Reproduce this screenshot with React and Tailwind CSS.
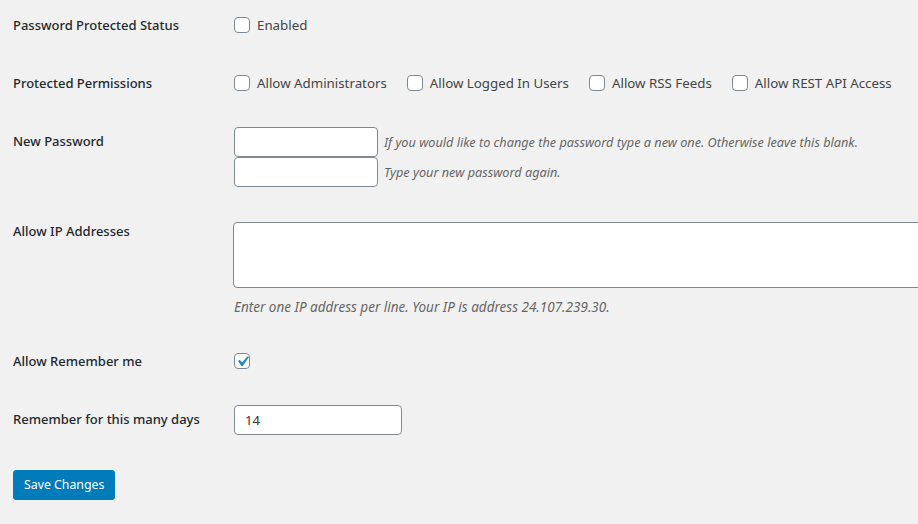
import React from 'react';

function Box({ checked }) {
    return (
        <span className="flex size-4 shrink-0 items-center justify-center rounded-[4px] border border-[#7e8993] bg-white">
            {checked && (
                <svg viewBox="0 0 20 20" className="size-[21px] shrink-0">
                    <path d="M14.83 4.89l1.34.94-5.81 8.38H9.02L5.78 9.67l1.34-1.25 2.57 2.4z" fill="#1e8cbe" />
                </svg>
            )}
        </span>
    );
}

function Check({ label, checked, last }) {
    return (
        <label className={`flex items-center gap-[7px] whitespace-nowrap text-[13.3px] text-[#444] ${last ? '' : 'mr-[20px]'}`}>
            <Box checked={checked} />
            <span>{label}</span>
        </label>
    );
}

function Th({ children, top = 0 }) {
    return (
        <div className="w-[221px] shrink-0 whitespace-nowrap font-medium text-[#23282d]" style={{ paddingTop: top }}>
            {children}
        </div>
    );
}

export default function App() {
    return (
        <div className="min-h-screen overflow-hidden bg-[#f1f1f1] pl-[13px] pt-[16px] text-[13px] leading-[18px] text-[#444]" style={{ fontFamily: '"Noto Sans", "Open Sans", sans-serif' }}>
            <div className="flex">
                <Th>Password Protected Status</Th>
                <Check label="Enabled" last />
            </div>

            <div className="mt-[40px] flex">
                <Th>Protected Permissions</Th>
                <div className="flex">
                    <Check label="Allow Administrators" />
                    <Check label="Allow Logged In Users" />
                    <Check label="Allow RSS Feeds" />
                    <Check label="Allow REST API Access" last />
                </div>
            </div>

            <div className="mt-[35px] flex">
                <Th top={5}>New Password</Th>
                <div className="flex flex-col">
                    <div className="flex items-center gap-[6px]">
                        <input type="password" className="h-[30px] w-[144px] rounded-[4px] border border-[#7e8993] bg-white" />
                        <span className="whitespace-nowrap text-[12.7px] italic text-[#666]">If you would like to change the password type a new one. Otherwise leave this blank.</span>
                    </div>
                    <div className="flex items-center gap-[6px]">
                        <input type="password" className="h-[30px] w-[144px] rounded-[4px] border border-[#7e8993] bg-white" />
                        <span className="whitespace-nowrap text-[12.7px] italic text-[#666]">Type your new password again.</span>
                    </div>
                </div>
            </div>

            <div className="mt-[35px] flex">
                <Th>Allow IP Addresses</Th>
                <div className="-ml-px flex flex-col">
                    <textarea className="h-[66px] w-[720px] resize-none rounded-[4px] border border-[#7e8993] bg-white" />
                    <p className="mt-[10px] ml-px whitespace-nowrap text-[13.5px] italic text-[#666]">Enter one IP address per line. Your IP is address 24.107.239.30.</p>
                </div>
            </div>

            <div className="mt-[36px] flex">
                <Th>Allow Remember me</Th>
                <div className="flex items-center">
                    <Box checked />
                </div>
            </div>

            <div className="mt-[35px] flex">
                <Th top={5}>Remember for this many days</Th>
                <input defaultValue="14" className="h-[30px] w-[168px] rounded-[4px] border border-[#7e8993] bg-white px-[10px] text-[#32373c]" />
            </div>

            <button className="mt-[35px] h-[30px] rounded-[3px] border border-[#007cba] bg-[#007cba] px-[10px] text-[12.3px] text-white">
                Save Changes
            </button>
        </div>
    );
}
